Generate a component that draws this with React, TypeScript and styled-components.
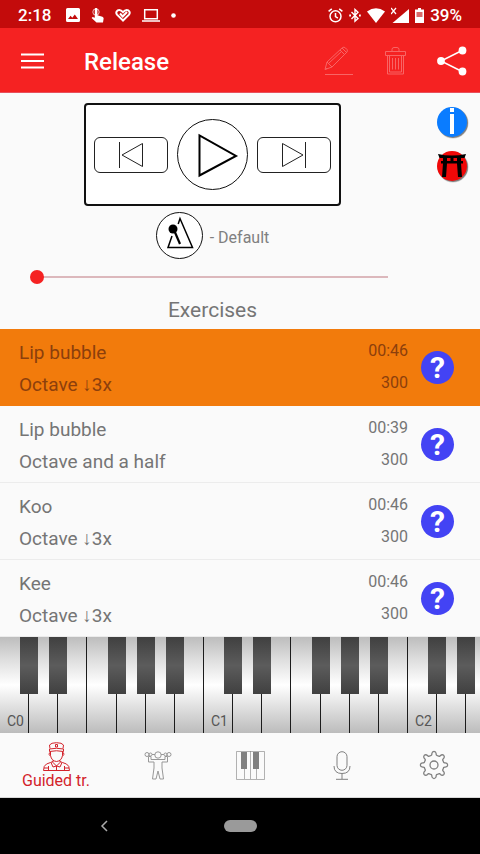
import React from "react";
import styled, { createGlobalStyle } from "styled-components";

const GlobalStyle = createGlobalStyle`
  *, *::before, *::after { box-sizing: border-box; }
  body { margin: 0; background: #fafafa; font-family: Roboto, "Liberation Sans", sans-serif; color: #757575; }
  h1, h2, p, ul { margin: 0; padding: 0; font-weight: 400; }
  button { border: 0; padding: 0; background: none; color: inherit; font: inherit; cursor: pointer; }
  svg { display: block; }
`;

const Screen = styled.div`
  min-height: 100vh;
  display: flex;
  flex-direction: column;
  overflow-x: hidden;
`;

const StatusBar = styled.div`
  height: 28px;
  display: flex;
  align-items: center;
  justify-content: space-between;
  padding: 2px 18px 0;
  background: #c30b0b;
  color: #fff;
  font-size: 17px;
  font-weight: 500;
`;

const StatusGroup = styled.div<{ $gap: number }>`
  display: flex;
  align-items: center;
  gap: ${(p) => p.$gap}px;
`;

const StatusTime = styled.span`
  margin-right: 4px;
`;

const AppBar = styled.header`
  height: 65px;
  display: flex;
  align-items: center;
  padding: 1px 13px 0 20px;
  background: #f52222;
  color: #fff;
  border-bottom: 1px solid #e8505c;
`;

const Title = styled.h1`
  flex: 1;
  padding: 2px 0 0 40px;
  font-size: 24px;
  line-height: 32px;
  font-weight: 500;
`;

const BarActions = styled.div`
  display: flex;
  align-items: center;
  gap: 31px;
`;

const BarButton = styled.button<{ $faded?: boolean }>`
  opacity: ${(p) => (p.$faded ? 0.3 : 1)};
`;

const Player = styled.main`
  display: grid;
  grid-template-columns: 1fr 55px;
`;

const PlayerColumn = styled.div`
  display: flex;
  flex-direction: column;
  align-items: center;
  padding-top: 10px;
`;

const SideColumn = styled.div`
  display: flex;
  flex-direction: column;
  gap: 8px;
  padding: 11px 0 0 10px;
`;

const Transport = styled.div`
  height: 103px;
  display: flex;
  align-items: center;
  gap: 9px;
  padding: 0 8px;
  background: #fff;
  border: 2px solid #111;
  border-radius: 4px;
`;

const SkipButton = styled.button`
  width: 74px;
  height: 36px;
  display: grid;
  place-items: center;
  border: 1px solid #222;
  border-radius: 6px;
`;

const RoundButton = styled.button<{ $size: number }>`
  width: ${(p) => p.$size}px;
  height: ${(p) => p.$size}px;
  display: grid;
  place-items: center;
  background: #fff;
  border: 1px solid #111;
  border-radius: 50%;
`;

const Tempo = styled.div`
  display: flex;
  align-items: center;
  gap: 7px;
  margin-top: 6px;
  font-size: 16px;
  color: #808080;
`;

const TempoLabel = styled.span`
  padding-top: 3px;
`;

const Slider = styled.input`
  appearance: none;
  width: calc(100% - 60px);
  height: 16px;
  margin: 10px 0 0;
  background: linear-gradient(#dcb8bc, #dcb8bc) right center / calc(100% - 7px) 2px no-repeat;
  &::-webkit-slider-thumb {
    appearance: none;
    width: 14px;
    height: 14px;
    border-radius: 50%;
    background: #f52222;
  }
  background-size: calc(100% - 14px) 2px;
  background-position: center;
`;

const Heading = styled.h2`
  margin-top: 12px;
  height: 32px;
  font-size: 21px;
  line-height: 26px;
`;

const List = styled.ul`
  flex: 1;
  list-style: none;
`;

const Row = styled.li<{ $active: boolean }>`
  height: 77px;
  display: grid;
  grid-template-columns: 1fr auto 33px;
  align-items: center;
  column-gap: 13px;
  padding: 0 26px 0 19px;
  background: ${(p) => (p.$active ? "#f27b0c" : "#fafafa")};
  color: ${(p) => (p.$active ? "#8c3f0c" : "#757575")};
  border-bottom: 1px solid ${(p) => (p.$active ? "#f27b0c" : "#ececec")};
`;

const Names = styled.div`
  padding-top: 4px;
  font-size: 19px;
  line-height: 32px;
`;

const Figures = styled.div`
  font-size: 16px;
  line-height: 32px;
  text-align: right;
`;

const HelpButton = styled.button`
  width: 33px;
  height: 33px;
  border-radius: 50%;
  background: #4343f4;
  color: #fff;
  font: 700 30px/33px Roboto, sans-serif;
`;

const Keyboard = styled.div`
  height: 96px;
  display: flex;
  overflow: hidden;
`;

const Octave = styled.div`
  flex: 0 0 42.5%;
  display: flex;
`;

const WhiteKey = styled.button`
  position: relative;
  flex: 1;
  display: flex;
  align-items: flex-end;
  padding: 0 0 3px 7px;
  background: linear-gradient(#bdbdbd, #dcdcdc 22%, #fff 50%, #e4e4e4 70%, #bcbcbc);
  border-right: 1px solid #1c1c1c;
  color: #555;
  font: 14px/18px Roboto, sans-serif;
`;

const BlackKey = styled.span`
  position: absolute;
  z-index: 1;
  top: 0;
  right: -10px;
  width: 18px;
  height: 57px;
  background: linear-gradient(#404040, #5c5c5c 50%, #404040);
`;

const Tabs = styled.nav`
  height: 65px;
  display: grid;
  grid-template-columns: 112px repeat(4, 1fr);
  border-bottom: 1px solid #d8d8d8;
`;

const Tab = styled.button<{ $active?: boolean }>`
  display: flex;
  flex-direction: column;
  align-items: center;
  justify-content: center;
  padding-top: ${(p) => (p.$active ? 2 : 0)}px;
  color: ${(p) => (p.$active ? "#d3222a" : "#808080")};
  font-size: 16px;
  line-height: 20px;
`;

const SystemNav = styled.div`
  height: 56px;
  display: grid;
  grid-template-columns: 1fr auto 1fr;
  align-items: center;
  background: #000;
`;

const BackButton = styled.button`
  justify-self: center;
  padding-right: 16px;
`;

const HomePill = styled.button`
  width: 33px;
  height: 12px;
  border-radius: 6px;
  background: #9a9a9a;
`;

const line = { fill: "none", stroke: "currentColor", strokeWidth: 1 } as const;

const PictureIcon = () => (
  <svg width="14" height="14" viewBox="0 0 14 14">
    <path fillRule="evenodd" fill="#fff" d="M1.5 0h11A1.5 1.5 0 0 1 14 1.500v11a1.500 1.500 0 0 1-1.500 1.500h-11A1.500 1.500 0 0 1 0 12.500v-11A1.500 1.500 0 0 1 1.500 0zM2 11h10L8.800 6.500 6.300 9.700 4.600 7.700z" />
  </svg>
);
const TouchIcon = () => (
  <svg width="13" height="15" viewBox="0 0 13 15">
    <circle cx="5" cy="4" r="3.200" fill="none" stroke="#fff" strokeWidth="1" opacity=".7" />
    <path fill="#fff" d="M3.800 1.200a1.300 1.300 0 0 1 2.600 0v6l5 1.500q1.400.5 1.200 2L12 14.500H5.500L.6 10l1-1 2.200.8z" />
  </svg>
);
const HeartIcon = () => (
  <svg width="16" height="13" viewBox="0 0 16 13" fill="none" stroke="#fff" strokeWidth="2">
    <path d="M8 11.500 2 5.700C.3 3.500 2 1 4.300 1 6 1 7 2 8 3.200 9 2 10 1 11.700 1 14 1 15.700 3.500 14 5.700zM5 4.500l2.700 3L12 3" />
  </svg>
);
const LaptopIcon = () => (
  <svg width="18" height="13" viewBox="0 0 18 13" fill="none" stroke="#fff" strokeWidth="1.500">
    <path d="M2.700.8h12.600v9H2.700zM0 12h18" />
  </svg>
);
const DotIcon = () => (
  <svg width="5" height="5" viewBox="0 0 5 5"><circle cx="2.500" cy="2.500" r="2.300" fill="#fff" /></svg>
);
const AlarmIcon = () => (
  <svg width="15" height="15" viewBox="0 0 15 15" fill="none" stroke="#fff" strokeWidth="1.500">
    <circle cx="7.500" cy="8.300" r="5.500" />
    <path d="M7.500 5v3.600l2.400 1.500M.6 3.400 3.800.8M14.400 3.400 11.200.8" />
  </svg>
);
const BluetoothIcon = () => (
  <svg width="12" height="15" viewBox="0 0 12 15" fill="none" stroke="#fff" strokeWidth="1.400">
    <path d="m2.500 4 6.500 6.500-3 2.700V1.500l3 2.800L2.500 11" />
    <path d="M.2 7.500h1.800M10 7.500h1.800" strokeWidth="2" />
  </svg>
);
const WifiIcon = () => (
  <svg width="18" height="15" viewBox="0 0 18 15"><path fill="#fff" d="M0 3.500Q9-3 18 3.500L9 15z" /></svg>
);
const SignalIcon = () => (
  <svg width="18" height="17" viewBox="0 0 18 17">
    <path fill="#fff" d="M18 2v14H1.500z" />
    <path d="m0 1 5 6M5 1 0 7" stroke="#fff" strokeWidth="1.200" />
  </svg>
);
const BatteryIcon = () => (
  <svg width="9" height="15" viewBox="0 0 9 15">
    <path fill="#fff" d="M3 0h3v1.500h3V15H0V1.500h3z" />
    <path fill="#d96a6a" d="M1.500 4h6v5h-6z" />
  </svg>
);

const MenuIcon = () => (
  <svg width="24" height="16" viewBox="0 0 24 16"><path d="M1 1.500h23M1 8h23M1 14.500h23" stroke="#fff" strokeWidth="2" /></svg>
);
const EditIcon = () => (
  <svg width="30" height="29" viewBox="0 0 30 29" {...line}>
    <path d="M1 23.500 3 16 18.500 1.500Q20 .5 21.500 2l1.500 1.500Q24 5 22.800 6.200L8 21zM16 4l5 5M18 2l5 5M3 16l5 5M5 17 18 5M1.500 22l1.500 1M1 28.500h28" />
  </svg>
);
const TrashIcon = () => (
  <svg width="21" height="29" viewBox="0 0 21 29" {...line}>
    <path d="M2.500 9.500h16V28h-16zM.5 5.500h20v4H.5zM7 5.500v-2q0-2 2-2h3q2 0 2 2v2M4.500 10v16h12V10M7.500 12v11.500M10.500 12v11.500M13.500 12v11.500" />
  </svg>
);
const ShareIcon = () => (
  <svg width="30" height="30" viewBox="0 0 30 30" fill="#fff">
    <path d="M26 4 4 15l22 11" fill="none" stroke="#fff" strokeWidth="1.500" />
    <circle cx="25.500" cy="4.500" r="3.900" /><circle cx="4" cy="15" r="3.900" /><circle cx="25.500" cy="25.500" r="3.900" />
  </svg>
);
const InfoIcon = () => (
  <svg width="36" height="36" viewBox="0 0 36 36">
    <circle cx="18" cy="19" r="15.500" fill="#000" opacity=".18" />
    <circle cx="18" cy="19" r="15" fill="#333" opacity=".5" />
    <circle cx="17" cy="18" r="15" fill="#0a7cff" />
    <path fill="#fff" d="M15 4h4v4h-4zM15 10h4v20h-4z" />
  </svg>
);
const ToriiIcon = () => (
  <svg width="36" height="36" viewBox="0 0 36 36">
    <circle cx="18" cy="19" r="15.500" fill="#000" opacity=".18" />
    <circle cx="18" cy="19" r="15" fill="#333" opacity=".5" />
    <circle cx="17" cy="18" r="15" fill="#f00808" />
    <path d="M3 6q14 3 28 0l-1.500 4H26v3h2v2.500h-2l1 13.500h-4l-1-13.500H12L11 29H7l1-13.500H6V13h2v-3H4.500zM12 10v3h3.500v-3zM18.500 10v3H22v-3z" fillRule="evenodd" />
  </svg>
);
const SkipIcon = ({ forward }: { forward?: boolean }) => (
  <svg width="26" height="28" viewBox="0 0 26 28" fill="none" stroke="#222">
    {forward ? <path d="M1.500 2.500v23L22 14zM24.500 1v26" /> : <path d="M24.500 2.500v23L4 14zM1.500 1v26" />}
  </svg>
);
const PlayIcon = () => (
  <svg width="52" height="46" viewBox="0 0 52 46"><path d="M12.500 3.500v40L49 24z" fill="none" stroke="#000" strokeWidth="2" /></svg>
);
const MetronomeIcon = () => (
  <svg width="45" height="45" viewBox="0 0 45 45" fill="none" stroke="#000" strokeWidth="1.500">
    <path d="M15 23 11 34.500h24.500L23 5.500l-1.800 5.500" />
    <path d="m17 17 6 14" strokeWidth="2.200" /><circle cx="16" cy="16" r="4.500" fill="#000" stroke="none" />
  </svg>
);

const TrainerIcon = () => (
  <svg width="27" height="29" viewBox="0 0 27 29" {...line} strokeLinejoin="round">
    <path d="M7 6.500 6.500 3Q8 .7 13.500.7T20.500 3L20 6.500M6.500 7q7-1.500 14 0v2.500q-7-1.500-14 0zM12.500 2.500h2v2.500h-2z" />
    <path d="M7.500 9.500v4q1 5.500 6 6 5-.5 6-6v-4M6.500 10.500q-1.200 2 .8 3.500M20.500 10.500q1.200 2-.8 3.500" />
    <path d="M10 18.500v2l3.500 3.500 3.500-3.500v-2M10 19.500l-2.500 1-4 1.500Q.5 23.500.5 28.500h26q0-5-3-6.500l-4-1.500-2.500-1M8 20.500l2 4.500 3.500-1 3.500 1 2-4.500M13.500 24v4.500M5.500 28.500V24M21.500 28.500V24M1 26h4.500M21.500 26H26" />
  </svg>
);
const LifterIcon = () => (
  <svg width="28" height="29" viewBox="0 0 28 29" {...line} strokeLinejoin="round" opacity=".8">
    <circle cx="14" cy="4" r="3.200" /><circle cx="3" cy="3.500" r="2" /><circle cx="25" cy="3.500" r="2" /><circle cx="6.500" cy="3.500" r="1.500" /><circle cx="21.500" cy="3.500" r="1.500" />
    <path d="M8 3.500h3M17 3.500h3M4.500 5.500V11H10v6L8.500 28H12l2-8 2 8h3.500L18 17v-6h5.500V5.500H21v3H7v-3z" />
  </svg>
);
const PianoIcon = () => (
  <svg width="29" height="29" viewBox="0 0 29 29" {...line}>
    <path d="M.5.500h28v28H.5zM8.500 18v10M20.500 18v10M14.500 0v28" opacity=".6" />
    <path d="M5 1h6v17H5zM17 1h6v17h-6z" fill="currentColor" stroke="none" />
  </svg>
);
const MicIcon = () => (
  <svg width="18" height="29" viewBox="0 0 18 29" {...line}>
    <rect x="4" y=".7" width="10" height="18.600" rx="5" />
    <path d="M1 15q0 7.500 8 7.500t8-7.500M9 22.500V28M3 28.300h12" />
  </svg>
);

const toothAngles = [0, 45, 90, 135, 180, 225, 270, 315];
const polar = (radius: number, degrees: number) => {
  const a = (degrees * Math.PI) / 180;
  return `${(15 + radius * Math.sin(a)).toFixed(2)} ${(15 - radius * Math.cos(a)).toFixed(2)}`;
};
const gearPath =
  toothAngles
    .map((a, i) =>
      [
        i === 0 ? `M${polar(10, a - 18)}` : `L${polar(10, a - 18)}`,
        `Q${polar(9.8, a - 12)} ${polar(11.5, a - 11)}`,
        `Q${polar(13.7, a - 8)} ${polar(13.7, a)}`,
        `Q${polar(13.7, a + 8)} ${polar(11.5, a + 11)}`,
        `Q${polar(9.8, a + 12)} ${polar(10, a + 18)}`,
      ].join("")
    )
    .join("") + "Z";
const GearIcon = () => (
  <svg width="30" height="30" viewBox="0 0 30 30" {...line} strokeWidth={1.3} strokeLinejoin="round">
    <path d={gearPath} /><circle cx="15" cy="15" r="4" />
  </svg>
);

const exercises = [
  { name: "Lip bubble", range: "Octave ↓3x", time: "00:46", tempo: 300, active: true },
  { name: "Lip bubble", range: "Octave and a half", time: "00:39", tempo: 300, active: false },
  { name: "Koo", range: "Octave ↓3x", time: "00:46", tempo: 300, active: false },
  { name: "Kee", range: "Octave ↓3x", time: "00:46", tempo: 300, active: false },
];

const notes = ["C", "D", "E", "F", "G", "A", "B"];

export default function App() {
  return (
    <Screen>
      <GlobalStyle />
      <StatusBar>
        <StatusGroup $gap={11}>
          <StatusTime>2:18</StatusTime>
          <PictureIcon /><TouchIcon /><HeartIcon /><LaptopIcon /><DotIcon />
        </StatusGroup>
        <StatusGroup $gap={6}>
          <AlarmIcon /><BluetoothIcon /><WifiIcon /><SignalIcon /><BatteryIcon />
          <span>39%</span>
        </StatusGroup>
      </StatusBar>
      <AppBar>
        <BarButton aria-label="Menu"><MenuIcon /></BarButton>
        <Title>Release</Title>
        <BarActions>
          <BarButton $faded aria-label="Edit"><EditIcon /></BarButton>
          <BarButton $faded aria-label="Delete"><TrashIcon /></BarButton>
          <BarButton aria-label="Share"><ShareIcon /></BarButton>
        </BarActions>
      </AppBar>
      <Player>
        <PlayerColumn>
          <Transport>
            <SkipButton aria-label="Previous"><SkipIcon /></SkipButton>
            <RoundButton $size={71} aria-label="Play"><PlayIcon /></RoundButton>
            <SkipButton aria-label="Next"><SkipIcon forward /></SkipButton>
          </Transport>
          <Tempo>
            <RoundButton $size={47} aria-label="Metronome"><MetronomeIcon /></RoundButton>
            <TempoLabel>- Default</TempoLabel>
          </Tempo>
          <Slider type="range" min={0} max={100} defaultValue={0} aria-label="Position" />
          <Heading>Exercises</Heading>
        </PlayerColumn>
        <SideColumn>
          <BarButton aria-label="Information"><InfoIcon /></BarButton>
          <BarButton aria-label="Dojo"><ToriiIcon /></BarButton>
        </SideColumn>
      </Player>
      <List>
        {exercises.map((e, i) => (
          <Row key={i} $active={e.active}>
            <Names><p>{e.name}</p><p>{e.range}</p></Names>
            <Figures><p>{e.time}</p><p>{e.tempo}</p></Figures>
            <HelpButton aria-label={`Help for ${e.name}`}>?</HelpButton>
          </Row>
        ))}
      </List>
      <Keyboard>
        {[0, 1, 2].map((octave) => (
          <Octave key={octave}>
            {notes.map((note) => (
              <WhiteKey key={note} aria-label={`${note}${octave}`}>
                {note === "C" && `C${octave}`}
                {note !== "E" && note !== "B" && <BlackKey />}
              </WhiteKey>
            ))}
          </Octave>
        ))}
      </Keyboard>
      <Tabs>
        <Tab $active><TrainerIcon />Guided tr.</Tab>
        <Tab aria-label="Workout"><LifterIcon /></Tab>
        <Tab aria-label="Piano"><PianoIcon /></Tab>
        <Tab aria-label="Recorder"><MicIcon /></Tab>
        <Tab aria-label="Settings"><GearIcon /></Tab>
      </Tabs>
      <SystemNav>
        <BackButton aria-label="Back">
          <svg width="8" height="12" viewBox="0 0 8 12"><path d="M7 1 2 6l5 5" fill="none" stroke="#aaa" strokeWidth="1.500" /></svg>
        </BackButton>
        <HomePill aria-label="Home" />
      </SystemNav>
    </Screen>
  );
}
